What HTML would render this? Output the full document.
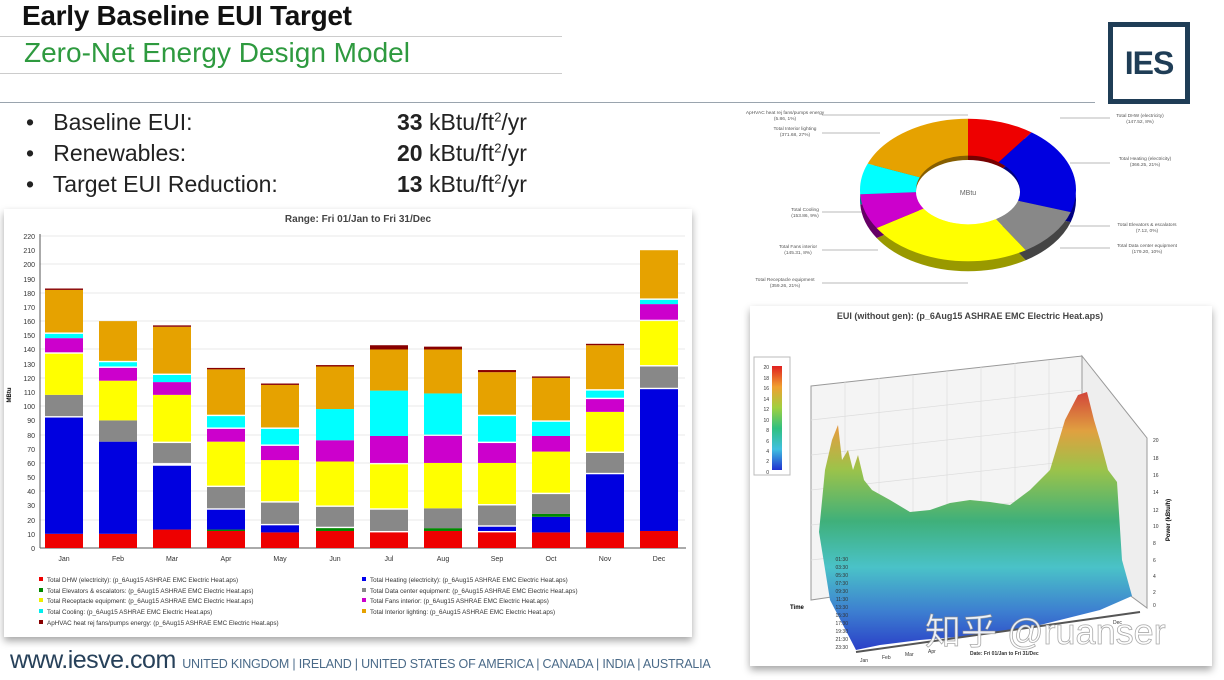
<!DOCTYPE html>
<html><head><meta charset="utf-8"><style>
body{margin:0;width:1224px;height:680px;background:#fff;position:relative;overflow:hidden;font-family:"Liberation Sans",sans-serif}
.t1{position:absolute;left:22px;top:0px;font-size:28px;font-weight:bold;color:#111;letter-spacing:-0.3px}
.t2{position:absolute;left:24px;top:37px;font-size:28px;color:#2e9a3f}
.hl{position:absolute;height:1px;background:#ccc}
.bl{position:absolute;left:26px;font-size:23px;color:#222}
.bv{position:absolute;left:397px;font-size:23px;color:#222}
.bv b{font-weight:bold}
</style></head><body>
<div class="t1">Early Baseline EUI Target</div>
<div class="hl" style="left:0;top:36px;width:562px"></div>
<div class="t2">Zero-Net Energy Design Model</div>
<div class="hl" style="left:0;top:73px;width:562px"></div>
<div class="hl" style="left:0;top:102px;width:1095px;background:#9aa4ae"></div>
<div class="bl" style="top:109px">•&nbsp;&nbsp; Baseline EUI:</div>
<div class="bl" style="top:140px">•&nbsp;&nbsp; Renewables:</div>
<div class="bl" style="top:171px">•&nbsp;&nbsp; Target EUI Reduction:</div>
<div class="bv" style="top:109px"><b>33</b> kBtu/ft<sup style="font-size:13px">2</sup>/yr</div>
<div class="bv" style="top:140px"><b>20</b> kBtu/ft<sup style="font-size:13px">2</sup>/yr</div>
<div class="bv" style="top:171px"><b>13</b> kBtu/ft<sup style="font-size:13px">2</sup>/yr</div>
<div style="position:absolute;left:1108px;top:22px;width:72px;height:72px;border:5px solid #1f3d56;font:bold 32px 'Liberation Sans',sans-serif;color:#1f3d56;text-align:center;line-height:72px;letter-spacing:-1px">IES</div>

<svg width="1224" height="680" style="position:absolute;left:0;top:0">
<defs>
<linearGradient id="sf" x1="0" y1="0" x2="0" y2="1">
<stop offset="0" stop-color="#d2453a"/><stop offset="0.15" stop-color="#e0a040"/><stop offset="0.3" stop-color="#9cc34a"/><stop offset="0.5" stop-color="#3fb07a"/><stop offset="0.68" stop-color="#4ac2c8"/><stop offset="0.85" stop-color="#3d7fd0"/><stop offset="1" stop-color="#2a3fc8"/></linearGradient>
<linearGradient id="lg" x1="0" y1="0" x2="0" y2="1"><stop offset="0" stop-color="#e02020"/><stop offset="0.2" stop-color="#f0a030"/><stop offset="0.4" stop-color="#a0d040"/><stop offset="0.6" stop-color="#30c080"/><stop offset="0.8" stop-color="#40c0e0"/><stop offset="1" stop-color="#2030d0"/></linearGradient>
<filter id="sh" x="-5%" y="-5%" width="110%" height="115%"><feDropShadow dx="0" dy="4" stdDeviation="4" flood-color="#000" flood-opacity="0.35"/></filter>
</defs>
<rect x="4" y="209" width="688" height="428" fill="#fff" filter="url(#sh)"/>
<text x="358" y="222" font-size="10" font-weight="bold" text-anchor="middle" fill="#444">Range: Fri 01/Jan to Fri 31/Dec</text>
<g stroke="#e8e8e8" stroke-width="1">
<line x1="40" y1="236" x2="685" y2="236"/><line x1="40" y1="264" x2="685" y2="264"/><line x1="40" y1="293" x2="685" y2="293"/><line x1="40" y1="321" x2="685" y2="321"/><line x1="40" y1="349" x2="685" y2="349"/><line x1="40" y1="378" x2="685" y2="378"/><line x1="40" y1="406" x2="685" y2="406"/><line x1="40" y1="435" x2="685" y2="435"/><line x1="40" y1="463" x2="685" y2="463"/><line x1="40" y1="491" x2="685" y2="491"/><line x1="40" y1="520" x2="685" y2="520"/>
</g>
<line x1="40" y1="234" x2="40" y2="548" stroke="#555"/><line x1="40" y1="548" x2="686" y2="548" stroke="#555"/>
<g font-size="7" fill="#333" text-anchor="end">
<text x="35" y="239">220</text><text x="35" y="253">210</text><text x="35" y="267">200</text><text x="35" y="282">190</text><text x="35" y="296">180</text><text x="35" y="310">170</text><text x="35" y="324">160</text><text x="35" y="338">150</text><text x="35" y="352">140</text><text x="35" y="367">130</text><text x="35" y="381">120</text><text x="35" y="395">110</text><text x="35" y="409">100</text><text x="35" y="423">90</text><text x="35" y="438">80</text><text x="35" y="452">70</text><text x="35" y="466">60</text><text x="35" y="480">50</text><text x="35" y="494">40</text><text x="35" y="508">30</text><text x="35" y="523">20</text><text x="35" y="537">10</text><text x="35" y="551">0</text>
</g>
<text x="11" y="395" font-size="6" font-weight="bold" transform="rotate(-90 11 395)" text-anchor="middle">MBtu</text>
<g transform="translate(0,548) scale(1,-1.418)">
<g transform="translate(45,0)">
<rect y="0" width="38" height="10" fill="#e00"/><rect y="10" width="38" height="82" fill="#0000e0"/><rect y="93" width="38" height="15" fill="#888"/><rect y="108" width="38" height="29" fill="#ff0"/><rect y="138" width="38" height="10" fill="#c0c"/><rect y="148" width="38" height="3" fill="#0ff"/><rect y="152" width="38" height="30" fill="#e6a200"/><rect y="182" width="38" height="1" fill="#800"/></g>
<g transform="translate(99,0)">
<rect y="0" width="38" height="10" fill="#e00"/><rect y="10" width="38" height="65" fill="#0000e0"/><rect y="75" width="38" height="15" fill="#888"/><rect y="90" width="38" height="28" fill="#ff0"/><rect y="118" width="38" height="9" fill="#c0c"/><rect y="128" width="38" height="3" fill="#0ff"/><rect y="132" width="38" height="28" fill="#e6a200"/></g>
<g transform="translate(153,0)">
<rect y="0" width="38" height="13" fill="#e00"/><rect y="13" width="38" height="45" fill="#0000e0"/><rect y="60" width="38" height="14" fill="#888"/><rect y="75" width="38" height="33" fill="#ff0"/><rect y="108" width="38" height="9" fill="#c0c"/><rect y="117" width="38" height="5" fill="#0ff"/><rect y="123" width="38" height="33" fill="#e6a200"/><rect y="156" width="38" height="1" fill="#800"/></g>
<g transform="translate(207,0)">
<rect y="0" width="38" height="12" fill="#e00"/><rect y="12" width="38" height="1" fill="#080"/><rect y="13" width="38" height="14" fill="#0000e0"/><rect y="28" width="38" height="15" fill="#888"/><rect y="44" width="38" height="31" fill="#ff0"/><rect y="75" width="38" height="9" fill="#c0c"/><rect y="85" width="38" height="8" fill="#0ff"/><rect y="94" width="38" height="32" fill="#e6a200"/><rect y="126" width="38" height="1" fill="#800"/></g>
<g transform="translate(261,0)">
<rect y="0" width="38" height="11" fill="#e00"/><rect y="11" width="38" height="5" fill="#0000e0"/><rect y="17" width="38" height="15" fill="#888"/><rect y="33" width="38" height="29" fill="#ff0"/><rect y="62" width="38" height="10" fill="#c0c"/><rect y="73" width="38" height="11" fill="#0ff"/><rect y="85" width="38" height="30" fill="#e6a200"/><rect y="115" width="38" height="1" fill="#800"/></g>
<g transform="translate(316,0)">
<rect y="0" width="38" height="12" fill="#e00"/><rect y="12" width="38" height="2" fill="#080"/><rect y="15" width="38" height="14" fill="#888"/><rect y="30" width="38" height="31" fill="#ff0"/><rect y="61" width="38" height="15" fill="#c0c"/><rect y="76" width="38" height="22" fill="#0ff"/><rect y="98" width="38" height="30" fill="#e6a200"/><rect y="128" width="38" height="1" fill="#800"/></g>
<g transform="translate(370,0)">
<rect y="0" width="38" height="11" fill="#e00"/><rect y="12" width="38" height="15" fill="#888"/><rect y="28" width="38" height="31" fill="#ff0"/><rect y="60" width="38" height="19" fill="#c0c"/><rect y="79" width="38" height="32" fill="#0ff"/><rect y="111" width="38" height="29" fill="#e6a200"/><rect y="140" width="38" height="3" fill="#800"/></g>
<g transform="translate(424,0)">
<rect y="0" width="38" height="12" fill="#e00"/><rect y="12" width="38" height="2" fill="#080"/><rect y="14" width="38" height="14" fill="#888"/><rect y="28" width="38" height="32" fill="#ff0"/><rect y="60" width="38" height="19" fill="#c0c"/><rect y="80" width="38" height="29" fill="#0ff"/><rect y="109" width="38" height="31" fill="#e6a200"/><rect y="140" width="38" height="2" fill="#800"/></g>
<g transform="translate(478,0)">
<rect y="0" width="38" height="11" fill="#e00"/><rect y="12" width="38" height="3" fill="#0000e0"/><rect y="16" width="38" height="14" fill="#888"/><rect y="31" width="38" height="29" fill="#ff0"/><rect y="60" width="38" height="14" fill="#c0c"/><rect y="75" width="38" height="18" fill="#0ff"/><rect y="94" width="38" height="30" fill="#e6a200"/><rect y="124" width="38" height="1.5" fill="#800"/></g>
<g transform="translate(532,0)">
<rect y="0" width="38" height="11" fill="#e00"/><rect y="11" width="38" height="11" fill="#0000e0"/><rect y="22" width="38" height="2" fill="#080"/><rect y="24" width="38" height="14" fill="#888"/><rect y="39" width="38" height="29" fill="#ff0"/><rect y="68" width="38" height="11" fill="#c0c"/><rect y="79" width="38" height="10" fill="#0ff"/><rect y="90" width="38" height="30" fill="#e6a200"/><rect y="120" width="38" height="1" fill="#800"/></g>
<g transform="translate(586,0)">
<rect y="0" width="38" height="11" fill="#e00"/><rect y="11" width="38" height="41" fill="#0000e0"/><rect y="53" width="38" height="14" fill="#888"/><rect y="68" width="38" height="28" fill="#ff0"/><rect y="96" width="38" height="9" fill="#c0c"/><rect y="106" width="38" height="5" fill="#0ff"/><rect y="112" width="38" height="31" fill="#e6a200"/><rect y="143" width="38" height="1" fill="#800"/></g>
<g transform="translate(640,0)">
<rect y="0" width="38" height="12" fill="#e00"/><rect y="12" width="38" height="100" fill="#0000e0"/><rect y="113" width="38" height="15" fill="#888"/><rect y="129" width="38" height="31" fill="#ff0"/><rect y="161" width="38" height="11" fill="#c0c"/><rect y="172" width="38" height="3" fill="#0ff"/><rect y="176" width="38" height="34" fill="#e6a200"/></g>
</g>
<g font-size="7" fill="#333" text-anchor="middle">
<text x="64" y="561">Jan</text><text x="118" y="561">Feb</text><text x="172" y="561">Mar</text><text x="226" y="561">Apr</text><text x="280" y="561">May</text><text x="335" y="561">Jun</text><text x="389" y="561">Jul</text><text x="443" y="561">Aug</text><text x="497" y="561">Sep</text><text x="551" y="561">Oct</text><text x="605" y="561">Nov</text><text x="659" y="561">Dec</text>
</g>
<g font-size="6.3" fill="#333">
<rect x="39" y="577" width="4" height="4" fill="#e00"/><text x="47" y="582">Total DHW (electricity):  (p_6Aug15 ASHRAE EMC Electric Heat.aps)</text>
<rect x="39" y="588" width="4" height="4" fill="#080"/><text x="47" y="593">Total Elevators &amp; escalators:  (p_6Aug15 ASHRAE EMC Electric Heat.aps)</text>
<rect x="39" y="598" width="4" height="4" fill="#ee0"/><text x="47" y="603">Total Receptacle equipment:  (p_6Aug15 ASHRAE EMC Electric Heat.aps)</text>
<rect x="39" y="609" width="4" height="4" fill="#0ee"/><text x="47" y="614">Total Cooling:  (p_6Aug15 ASHRAE EMC Electric Heat.aps)</text>
<rect x="39" y="620" width="4" height="4" fill="#800"/><text x="47" y="625">ApHVAC heat rej fans/pumps energy:  (p_6Aug15 ASHRAE EMC Electric Heat.aps)</text>
<rect x="362" y="577" width="4" height="4" fill="#00e"/><text x="370" y="582">Total Heating (electricity):  (p_6Aug15 ASHRAE EMC Electric Heat.aps)</text>
<rect x="362" y="588" width="4" height="4" fill="#888"/><text x="370" y="593">Total Data center equipment:  (p_6Aug15 ASHRAE EMC Electric Heat.aps)</text>
<rect x="362" y="598" width="4" height="4" fill="#c0c"/><text x="370" y="603">Total Fans interior:  (p_6Aug15 ASHRAE EMC Electric Heat.aps)</text>
<rect x="362" y="609" width="4" height="4" fill="#e6a200"/><text x="370" y="614">Total Interior lighting:  (p_6Aug15 ASHRAE EMC Electric Heat.aps)</text>
</g>

<!-- donut -->
<g transform="translate(968,200) scale(1,0.66) rotate(-90)" fill="none" stroke-width="56">
<circle r="80" stroke="#700" stroke-dasharray="50.3 502.7" stroke-dashoffset="0"/>
<circle r="80" stroke="#000080" stroke-dasharray="100.5 502.7" stroke-dashoffset="-50.3"/>
<circle r="80" stroke="#444" stroke-dasharray="55.3 502.7" stroke-dashoffset="-150.8"/>
<circle r="80" stroke="#990" stroke-dasharray="125.7 502.7" stroke-dashoffset="-206.1"/>
<circle r="80" stroke="#606" stroke-dasharray="40.2 502.7" stroke-dashoffset="-331.8"/>
<circle r="80" stroke="#088" stroke-dasharray="35.2 502.7" stroke-dashoffset="-372"/>
<circle r="80" stroke="#865e00" stroke-dasharray="95.5 502.7" stroke-dashoffset="-407.2"/>
</g>
<g transform="translate(968,190) scale(1,0.66) rotate(-90)" fill="none" stroke-width="56">
<circle r="80" stroke="#e00" stroke-dasharray="50.3 502.7" stroke-dashoffset="0"/>
<circle r="80" stroke="#0000e0" stroke-dasharray="100.5 502.7" stroke-dashoffset="-50.3"/>
<circle r="80" stroke="#888" stroke-dasharray="55.3 502.7" stroke-dashoffset="-150.8"/>
<circle r="80" stroke="#ff0" stroke-dasharray="125.7 502.7" stroke-dashoffset="-206.1"/>
<circle r="80" stroke="#c0c" stroke-dasharray="40.2 502.7" stroke-dashoffset="-331.8"/>
<circle r="80" stroke="#0ff" stroke-dasharray="35.2 502.7" stroke-dashoffset="-372"/>
<circle r="80" stroke="#e6a200" stroke-dasharray="95.5 502.7" stroke-dashoffset="-407.2"/>
</g>
<ellipse cx="968" cy="192" rx="52" ry="32" fill="#fff"/>
<text x="968" y="195" font-size="7" fill="#666" text-anchor="middle">MBtu</text>
<g stroke="#777" stroke-width="0.6"><line x1="822" y1="115" x2="968" y2="115"/><line x1="822" y1="133" x2="880" y2="133"/><line x1="1060" y1="118" x2="1110" y2="118"/><line x1="1070" y1="163" x2="1110" y2="163"/><line x1="822" y1="212" x2="862" y2="212"/><line x1="822" y1="250" x2="878" y2="250"/><line x1="822" y1="283" x2="968" y2="283"/><line x1="1070" y1="226" x2="1110" y2="226"/><line x1="1060" y1="248" x2="1110" y2="248"/></g>
<g font-size="4.8" fill="#555" text-anchor="middle">
<text x="785" y="114">ApHVAC heat rej fans/pumps energy</text><text x="785" y="120">(5.86, 1%)</text>
<text x="795" y="130">Total Interior lighting</text><text x="795" y="136">(371.68, 27%)</text>
<text x="1140" y="117">Total DHW (electricity)</text><text x="1140" y="123">(147.52, 8%)</text>
<text x="1145" y="160">Total Heating (electricity)</text><text x="1145" y="166">(366.25, 21%)</text>
<text x="805" y="211">Total Cooling</text><text x="805" y="217">(153.86, 9%)</text>
<text x="798" y="248">Total Fans interior</text><text x="798" y="254">(145.31, 8%)</text>
<text x="785" y="281">Total Receptacle equipment</text><text x="785" y="287">(359.26, 21%)</text>
<text x="1147" y="226">Total Elevators &amp; escalators</text><text x="1147" y="232">(7.12, 0%)</text>
<text x="1147" y="247">Total Data center equipment</text><text x="1147" y="253">(179.20, 10%)</text>
</g>

<rect x="750" y="306" width="462" height="360" fill="#fff" filter="url(#sh)"/>
<text x="970" y="319" font-size="9" font-weight="bold" text-anchor="middle" fill="#444">EUI (without gen):  (p_6Aug15 ASHRAE EMC Electric Heat.aps)</text>
<polygon points="811,386 1082,356 1082,560 811,600" fill="#f4f4f4" stroke="#999"/>
<polygon points="1082,356 1147,438 1147,608 1082,560" fill="#eee" stroke="#999"/>
<g stroke="#ddd" stroke-width="0.7">
<line x1="811" y1="420" x2="1082" y2="390"/><line x1="811" y1="455" x2="1082" y2="425"/><line x1="811" y1="490" x2="1082" y2="460"/><line x1="811" y1="525" x2="1082" y2="495"/><line x1="811" y1="560" x2="1082" y2="530"/>
<line x1="845" y1="382" x2="845" y2="596"/><line x1="879" y1="378" x2="879" y2="592"/><line x1="913" y1="375" x2="913" y2="588"/><line x1="947" y1="371" x2="947" y2="584"/><line x1="981" y1="367" x2="981" y2="578"/><line x1="1015" y1="363" x2="1015" y2="572"/><line x1="1049" y1="360" x2="1049" y2="566"/>
</g>
<polygon points="819,532 825,470 832,440 838,425 842,460 848,450 853,470 858,455 864,480 872,490 890,500 910,512 930,510 950,503 970,500 990,502 1010,505 1030,490 1050,470 1065,420 1078,395 1087,392 1094,420 1100,440 1108,470 1117,482 1122,560 1132,596 1100,610 1040,625 980,635 920,640 880,645 856,650 830,600" fill="url(#sf)"/>
<rect x="754" y="357" width="36" height="118" fill="#fff" stroke="#bbb"/>
<rect x="772" y="366" width="10" height="104" fill="url(#lg)"/>
<g font-size="5" fill="#333" text-anchor="end"><text x="769" y="369">20</text><text x="769" y="380">18</text><text x="769" y="390">16</text><text x="769" y="401">14</text><text x="769" y="411">12</text><text x="769" y="422">10</text><text x="769" y="432">8</text><text x="769" y="443">6</text><text x="769" y="453">4</text><text x="769" y="463">2</text><text x="769" y="474">0</text></g>
<g font-size="5" fill="#333"><text x="1153" y="442">20</text><text x="1153" y="460">18</text><text x="1153" y="477">16</text><text x="1153" y="494">14</text><text x="1153" y="512">12</text><text x="1153" y="528">10</text><text x="1153" y="545">8</text><text x="1153" y="562">6</text><text x="1153" y="578">4</text><text x="1153" y="594">2</text><text x="1153" y="607">0</text></g>
<text x="1170" y="520" font-size="6" font-weight="bold" transform="rotate(-90 1170 520)" text-anchor="middle">Power (kBtu/h)</text>
<g font-size="5" fill="#333" text-anchor="end"><text x="848" y="561">01:30</text><text x="848" y="569">03:30</text><text x="848" y="577">05:30</text><text x="848" y="585">07:30</text><text x="848" y="593">09:30</text><text x="848" y="601">11:30</text><text x="848" y="609">13:30</text><text x="848" y="617">15:30</text><text x="848" y="625">17:30</text><text x="848" y="633">19:30</text><text x="848" y="641">21:30</text><text x="848" y="649">23:30</text></g>
<text x="790" y="609" font-size="6" font-weight="bold">Time</text>
<line x1="856" y1="652" x2="1140" y2="612" stroke="#555" stroke-width="2"/>
<g font-size="5" fill="#333"><text x="860" y="662">Jan</text><text x="882" y="659">Feb</text><text x="905" y="656">Mar</text><text x="928" y="653">Apr</text><text x="970" y="655" font-weight="bold">Date: Fri 01/Jan to Fri 31/Dec</text><text x="1113" y="624">Dec</text></g>
<text x="925" y="644" font-size="36" fill="#fff" fill-opacity="0.9" stroke="#888" stroke-width="0.8" stroke-opacity="0.7" font-family="'Liberation Sans','Noto Sans CJK SC',sans-serif">知乎 @ruanser</text>
</svg>
<div style="position:absolute;left:10px;top:646px;font-size:25px;color:#27415a;white-space:nowrap;letter-spacing:-0.5px">www.iesve.com <span style="font-size:12.5px;color:#4a6a88;letter-spacing:-0.2px">UNITED KINGDOM | IRELAND | UNITED STATES OF AMERICA | CANADA | INDIA | AUSTRALIA</span></div>
</body></html>
